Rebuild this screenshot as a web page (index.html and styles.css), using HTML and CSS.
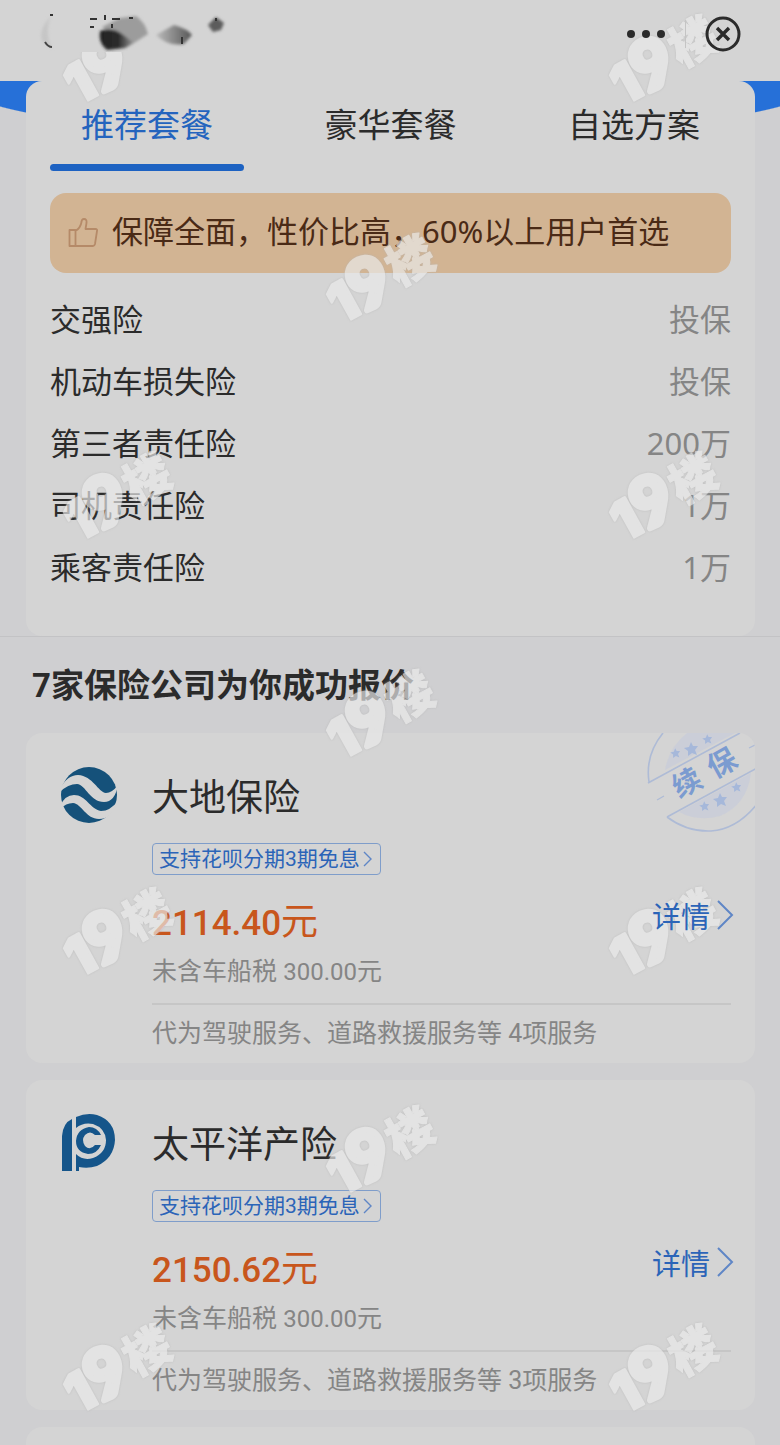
FILE: index.html
```html
<!DOCTYPE html>
<html lang="zh-CN">
<head>
<meta charset="utf-8">
<meta name="viewport" content="width=device-width, initial-scale=1">
<title>车险报价</title>
<link rel="stylesheet" href="styles.css">
</head>
<body>
<div class="page">
  <header class="topbar">
    <svg class="smudge" width="220" height="70" viewBox="20 0 220 70" aria-hidden="true">
      <defs>
        <filter id="soft" x="-30%" y="-30%" width="160%" height="160%"><feGaussianBlur stdDeviation="1.6"/></filter>
        <linearGradient id="ink"><stop offset="0" stop-color="#222"/><stop offset=".55" stop-color="#2c2c2c"/><stop offset="1" stop-color="#999"/></linearGradient>
        <linearGradient id="ink2"><stop offset="0" stop-color="#bbb"/><stop offset="1" stop-color="#555"/></linearGradient>
      </defs>
      <g filter="url(#soft)">
        <path d="M51 17Q38 31 42 42l10 8q-8-17-1-33z" fill="#c6c6c6"/>
        <path d="M102 28l18-9 16-2q9 6 12 18l-14 9-22-8z" fill="#9c9c9c"/>
        <path d="M100 32q12-4 22 3l12 9-9 5-18 2q-9-7-7-19z" fill="url(#ink)"/>
        <path d="M156 36l18-10q14 4 18 10l-8 9q-16 3-28-9z" fill="url(#ink2)"/>
        <path d="M208 26l8-8 8 6-3 7-8 2z" fill="#5b5b5b"/>
      </g>
      <path d="M45 43q3 5 7 5" fill="none" stroke="#444" stroke-width="2"/>
      <path d="M50 16h3M90 20h7M105 16v5M112 20h8M129 19h4M90 28h4M112 25v4M216 19v3M182 38v7" stroke="#333" stroke-width="2"/>
    </svg>
    <div class="capsule">
      <button class="icon-btn" type="button" aria-label="更多">
        <svg width="40" height="10" viewBox="0 0 40 10"><circle cx="5" cy="5" r="4"/><circle cx="20" cy="5" r="4"/><circle cx="35" cy="5" r="4"/></svg>
      </button>
      <span class="capsule-line"></span>
      <button class="icon-btn" type="button" aria-label="关闭">
        <svg width="36" height="36" viewBox="0 0 36 36" fill="none" stroke="#2b2b2b"><circle cx="18" cy="18" r="16" stroke-width="3"/><path d="M12 12l12 12M24 12L12 24" stroke-width="3.400"/></svg>
      </button>
    </div>
  </header>

  <main>
    <section class="plan-area">
      <div class="plan card">
        <nav class="tabs">
          <button class="tab active" type="button">推荐套餐</button>
          <button class="tab" type="button">豪华套餐</button>
          <button class="tab" type="button">自选方案</button>
        </nav>
        <p class="banner">
          <svg width="30" height="30" viewBox="0 0 30 30" fill="none" stroke="#b58a68" stroke-width="1.800" stroke-linejoin="round"><path d="M1.500 12h6v16h-6zM7.500 13q5-3 6-9 0-3 2.500-3 3 0 2.500 4l-1 6h10q2 0 1.500 2l-2 13q-.5 2-2 2H7.500"/></svg>
          <span>保障全面，性价比高，60%以上用户首选</span>
        </p>
        <dl class="items">
          <div class="item"><dt>交强险</dt><dd>投保</dd></div>
          <div class="item"><dt>机动车损失险</dt><dd>投保</dd></div>
          <div class="item"><dt>第三者责任险</dt><dd>200万</dd></div>
          <div class="item"><dt>司机责任险</dt><dd>1万</dd></div>
          <div class="item"><dt>乘客责任险</dt><dd>1万</dd></div>
        </dl>
      </div>
    </section>

    <section class="quotes">
      <h1 class="title">7家保险公司为你成功报价</h1>

      <article class="quote card">
        <svg class="stamp" width="112" height="100" viewBox="0 0 112 100" aria-hidden="true">
          <g fill="none" stroke="#aebbd6" stroke-width="1.600">
            <path d="M4 49Q0 22 18 0M3 50L95 0M22 84L112 35M22 84Q42 99 66 98 92 96 112 71"/>
            <path d="M12 67l7-4M104 15l8-4" stroke-width="1.200"/>
          </g>
          <path d="M20 37Q24 14 42 0h48z" fill="#c7ccda" opacity=".7"/>
          <path d="M34 79L106 40q-4 32-31 43-22 6-41-4z" fill="#c7ccda" opacity=".7"/>
          <g fill="#a6b8da">
            <path id="star" d="M46 9l2 4 5 0-3 4 2 5-5-2-4 3 0-5-4-3 5-1z"/>
            <use href="#star" transform="translate(-2 9) scale(.7)"/>
            <use href="#star" transform="translate(30 -5) scale(.7)"/>
            <use href="#star" transform="translate(29 51)"/>
            <use href="#star" transform="translate(27 62) scale(.7)"/>
            <use href="#star" transform="translate(59 43) scale(.7)"/>
          </g>
          <g class="stamp-text" text-anchor="middle">
            <text transform="translate(47 59) rotate(-29)">续</text>
            <text transform="translate(82 39) rotate(-29)">保</text>
          </g>
        </svg>
        <svg class="logo" width="60" height="60" viewBox="0 0 60 60" aria-hidden="true">
          <circle cx="30" cy="30" r="28" fill="#15517a"/>
          <g fill="#d4d4d4">
            <path d="M1 24Q8 10 19 10C34 11 39 27 47 28Q53 28 59 20Q56 37 45 37C31 37 27 20 18 19Q9 19 1 27z"/>
            <path d="M1 41Q6 30 15 30C27 30 31 44 42 46Q51 46 59 36Q53 54 40 54C27 54 23 39 14 38Q7 38 1 44z"/>
          </g>
        </svg>
        <div class="info">
          <h2 class="name">大地保险</h2>
          <a class="tag" href="#">支持花呗分期3期免息<svg width="10" height="16" viewBox="0 0 10 16"><path d="M1 1l7 7-7 7"/></svg></a>
          <div class="price-row">
            <p class="price">2114.40<span>元</span></p>
            <a class="detail" href="#">详情<svg width="18" height="32" viewBox="0 0 18 32"><path d="M2 2l14 14L2 30"/></svg></a>
          </div>
          <p class="tax">未含车船税 <span>300.00</span>元</p>
          <p class="service">代为驾驶服务、道路救援服务等 4项服务</p>
        </div>
      </article>

      <article class="quote card">
        <svg class="logo" width="60" height="60" viewBox="0 0 60 60" aria-hidden="true">
          <g fill="#15558a">
            <path d="M3 59V24Q4 11 13 7v52z"/>
            <path d="M17 5Q28 0 38 3q18 6 18 25-1 18-18 26-9 3-18 1v4h-3V42q7 7 17 4 13-5 13-18-1-12-13-16-10-2-17 4z"/>
            <path fill-rule="evenodd" d="M30 15q8 0 12 8h-6q-5-5-10 0-4 5 0 11 5 5 10-1h6q-4 9-13 9-12-2-12-13 1-12 13-14z"/>
          </g>
        </svg>
        <div class="info">
          <h2 class="name">太平洋产险</h2>
          <a class="tag" href="#">支持花呗分期3期免息<svg width="10" height="16" viewBox="0 0 10 16"><path d="M1 1l7 7-7 7"/></svg></a>
          <div class="price-row">
            <p class="price">2150.62<span>元</span></p>
            <a class="detail" href="#">详情<svg width="18" height="32" viewBox="0 0 18 32"><path d="M2 2l14 14L2 30"/></svg></a>
          </div>
          <p class="tax">未含车船税 <span>300.00</span>元</p>
          <p class="service">代为驾驶服务、道路救援服务等 3项服务</p>
        </div>
      </article>

      <article class="next"></article>
    </section>
  </main>

  <svg class="marks" width="780" height="1445" viewBox="0 0 780 1445" aria-hidden="true">
    <defs>
      <g id="mark" class="mark" text-anchor="middle">
        <text class="mark-one" transform="translate(18 72) rotate(-29)" y="19">1</text>
        <text class="mark-nine" transform="translate(44 53) rotate(-25)" y="24">9</text>
        <text class="mark-cjk" transform="translate(85 31) rotate(-29)" y="17">楼</text>
      </g>
      <clipPath id="low"><path d="M60 52h66v60H60z"/></clipPath>
    </defs>
    <g clip-path="url(#low)"><use href="#mark" x="62" y="11"/></g>
    <use href="#mark" x="608" y="11"/>
    <use href="#mark" x="325" y="230"/>
    <use href="#mark" x="62" y="448"/>
    <use href="#mark" x="608" y="448"/>
    <use href="#mark" x="325" y="666"/>
    <use href="#mark" x="62" y="884"/>
    <use href="#mark" x="608" y="884"/>
    <use href="#mark" x="325" y="1102"/>
    <use href="#mark" x="62" y="1320"/>
    <use href="#mark" x="608" y="1320"/>
  </svg>
</div>
</body>
</html>
```
FILE: styles.css
```css
* { box-sizing: border-box; }
body, h1, h2, p, dl, dd { margin: 0; }
body {
  background: #cfcfd1;
  color: #2b2b2b;
  font-family: "Noto Sans CJK SC", sans-serif;
}
button { padding: 0; border: 0; background: none; font: inherit; color: inherit; }
a { color: #2b64b8; text-decoration: none; }
svg { display: block; flex: none; }
.page { position: relative; overflow: hidden; }
.card { background: #d4d4d4; border-radius: 16px; }

.topbar {
  display: flex;
  justify-content: space-between;
  align-items: center;
  height: 81px;
  padding: 0 20px 14px;
  background: #d4d4d4;
}
.capsule {
  position: relative;
  z-index: 2;
  display: flex;
  align-items: center;
  gap: 19px;
  padding: 8px 19px;
}
.icon-btn { fill: #2b2b2b; }
.capsule-line { width: 1px; height: 28px; background: #c4c4c4; }

.plan-area {
  padding: 0 25px 0 26px;
  background: radial-gradient(56% 58px at 50% 0, #2670d8 99%, transparent 100%) no-repeat;
  border-bottom: 1px solid #c3c3c5;
}
.plan { padding: 0 24px 38px; }
.tabs { display: grid; grid-template-columns: repeat(3, 194px); justify-content: space-between; }
.tab { height: 90px; padding-bottom: 6px; font-size: 33px; line-height: 84px; }
.tab.active { position: relative; color: #2464be; }
.tab.active::after {
  content: "";
  position: absolute;
  left: 0;
  right: 0;
  bottom: 0;
  height: 7px;
  border-radius: 4px;
  background: #1d62c2;
}
.banner {
  display: flex;
  align-items: center;
  gap: 14px;
  height: 80px;
  margin-top: 22px;
  padding: 0 18px;
  border-radius: 16px;
  background: #d2b493;
  color: #4a2a16;
  font: 31px/40px "Noto Sans", "Noto Sans CJK SC", sans-serif;
  white-space: nowrap;
}
.banner span { padding-bottom: 4px; }
.items { padding-top: 15px; font: 31px "Noto Sans", "Noto Sans CJK SC", sans-serif; }
.item { display: flex; justify-content: space-between; line-height: 62px; }
.item dd { color: #858585; }

.quotes { display: grid; gap: 17px; padding: 24px 25px 0 26px; }
.title { padding-left: 6px; margin-bottom: 5px; font: 700 33px/50px Roboto, "Noto Sans CJK SC", sans-serif; }
.quote { position: relative; display: flex; gap: 33px; padding: 32px 24px 0 33px; overflow: hidden; }
.info { flex: 1; min-width: 0; }
.name { font-size: 37px; font-weight: 400; line-height: 60px; }
.tag {
  display: inline-flex;
  align-items: center;
  gap: 3px;
  height: 32px;
  margin-top: 18px;
  padding: 0 7px 0 6px;
  border: 1px solid #7f9dca;
  border-radius: 4px;
  font: 21px/30px Roboto, "Noto Sans CJK SC", sans-serif;
  vertical-align: top;
}
.tag svg, .detail svg { fill: none; stroke: #5f86c6; stroke-width: 1.4; }
.detail svg { stroke-width: 2; }
.price-row { display: flex; justify-content: space-between; align-items: flex-start; height: 52px; margin-top: 18px; }
.price { color: #c8561c; font: 500 35px/52px Roboto, "Noto Sans CJK SC", sans-serif; }
.price span { font-family: "Noto Sans CJK SC", sans-serif; font-weight: 400; font-size: 37px; }
.detail { position: relative; z-index: 2; display: flex; align-items: center; gap: 6px; margin-right: -3px; font-size: 29px; line-height: 44px; }
.tax, .service { color: #858585; font: 25px/54px Roboto, "Noto Sans CJK SC", sans-serif; white-space: nowrap; }
.tax { padding-bottom: 4px; border-bottom: 2px solid #c6c6c6; }
.tax span { font-size: 24px; }
.service { line-height: 58px; }
.stamp { position: absolute; right: -2px; top: 0; }
.stamp-text { fill: #7b9bd0; font-size: 29px; font-weight: 700; }
.next { height: 18px; border-radius: 16px 16px 0 0; background: #d4d4d4; }

.marks { position: absolute; left: 0; top: 0; pointer-events: none; }
.mark {
  fill: #ebebeb;
  stroke: #ebebeb;
  stroke-width: 2;
  stroke-linejoin: round;
  font-weight: 900;
  opacity: .68;
  filter: drop-shadow(0 0 1px #b4b4b4);
}
.mark-one { font-family: Inter, sans-serif; font-size: 54px; stroke-width: 3; }
.mark-nine { font-family: Lato, sans-serif; font-size: 68px; stroke-width: 6; }
.mark-cjk { font-family: "Noto Sans CJK SC", sans-serif; font-size: 47px; stroke-width: 1; }
```
